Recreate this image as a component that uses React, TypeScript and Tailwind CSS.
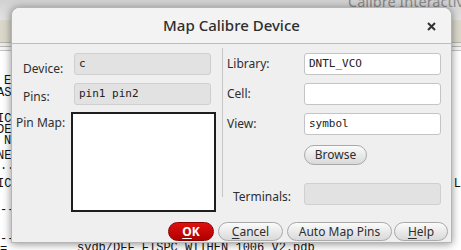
import React from "react";

const sans = { fontFamily: '"Noto Sans", "Open Sans", sans-serif' };
const mono = { fontFamily: '"DejaVu Sans Mono", monospace' };
const bgMono = { fontFamily: '"Liberation Mono", monospace' };

function Field({ value, disabled }: { value?: string; disabled?: boolean }) {
  return (
    <div
      className={
        "w-[137px] h-[22px] shrink-0 rounded-[3px] border flex items-center px-[4px] text-[11px] text-[#222] " +
        (disabled ? "bg-[#e2e2e2] border-[#cfcfcf]" : "bg-white border-[#c4c4c4]")
      }
      style={mono}
    >
      {value}
    </div>
  );
}

function Btn({ children, w }: { children: React.ReactNode; w: string }) {
  return (
    <div
      className={
        "h-[19px] rounded-full border border-[#a9a9a9] bg-gradient-to-b from-[#fbfbfb] to-[#d9d9d9] flex items-center justify-center text-[12px] text-[#2e2e2e] " +
        w
      }
      style={sans}
    >
      {children}
    </div>
  );
}

const bgLines: { t: string; h: string; ml: number }[] = [
  { t: "E", h: "h-[12px]", ml: 4 },
  { t: "AS", h: "h-[26px]", ml: -3 },
  { t: "IC", h: "h-[11px]", ml: -3 },
  { t: "DE", h: "h-[11px]", ml: -3 },
  { t: "N", h: "h-[15px]", ml: 4 },
  { t: "NE", h: "h-[10px]", ml: -3 },
  { t: "..", h: "h-[18px]", ml: 0 },
  { t: "IC", h: "h-[26px]", ml: -3 },
  { t: "--", h: "h-[29px]", ml: 0 },
  { t: "--", h: "h-[10px]", ml: 0 },
  { t: "=", h: "h-[10px]", ml: 0 },
];

export default function App() {
  return (
    <div className="relative w-[461px] h-[250px] overflow-hidden bg-white">
      {/* background window */}
      <div className="flex flex-col">
        <div className="h-[20px] bg-gradient-to-b from-[#d2d2d2] to-[#e2e2e2] flex">
          <div className="ml-[348px] mt-[-9px] text-[14.5px] text-[#8a8a8a] whitespace-nowrap" style={sans}>
            Calibre Interactive
          </div>
        </div>
        <div className="h-[23px] bg-[#dbd8cb] border-b border-[#b9b6aa]" />
        <div className="h-[3px] bg-[#ecebe6]" />
        <div className="h-[1px] bg-[#b9b9b9]" />
        <div className="h-[3px] bg-[#f4f4f4]" />
        <div className="h-[1px] bg-[#c4c4c4]" />
        <div className="flex">
          <div className="flex flex-col pt-[25px] text-[12px] leading-[10px] text-[#111]" style={bgMono}>
            {bgLines.map((l, i) => (
              <div key={i} className={"whitespace-pre " + l.h} style={{ marginLeft: l.ml }}>
                {l.t}
              </div>
            ))}
          </div>
          <div className="flex-1" />
          <div className="pt-[124px] text-[12px] text-[#111]" style={bgMono}>
            <span>L</span>
          </div>
        </div>
      </div>
      <div className="absolute left-[77px] top-[239px] text-[12px] text-[#111] whitespace-nowrap" style={bgMono}>
        svdb/DFF_FTSPC_WITHEN_1006_V2.pdb
      </div>

      {/* dialog */}
      <div
        className="absolute left-[11px] top-[7px] w-[441px] h-[236px] rounded-t-[8px] bg-[#efefef] border border-[#b5b5b5] shadow-[0_1px_8px_rgba(0,0,0,0.45)] flex flex-col"
        style={sans}
      >
        <div className="relative h-[36px] shrink-0 rounded-t-[8px] bg-[#f3f3f3] border-b border-[#bdbdbd] flex items-center justify-center">
          <span className="text-[15px] font-medium text-[#2e2e2e]">Map Calibre Device</span>
          <svg className="absolute right-[15px] top-[14px]" width="9" height="9" viewBox="0 0 9 9">
            <path d="M1 1 L8 8 M8 1 L1 8" stroke="#2e3436" strokeWidth="2" />
          </svg>
        </div>

        <div className="flex flex-1">
          {/* left column */}
          <div className="w-[210px] pt-[9px] flex flex-col">
            <div className="flex items-center h-[22px]">
              <span className="w-[62px] pl-[11px] translate-y-[5px] text-[12px] text-[#2e2e2e]">Device:</span>
              <Field value="c" disabled />
            </div>
            <div className="flex items-center h-[22px] mt-[8px]">
              <span className="w-[62px] pl-[11px] translate-y-[3px] text-[12px] text-[#2e2e2e]">Pins:</span>
              <Field value="pin1 pin2" disabled />
            </div>
            <div className="flex items-start mt-[7px]">
              <span className="w-[59px] pl-[4px] mt-[2px] text-[12px] text-[#2e2e2e]">Pin Map:</span>
              <div className="w-[145px] h-[100px] bg-white border-2 border-[#1e1e1e]" />
            </div>
          </div>

          {/* divider */}
          <div className="mt-[4px] mb-[25px] w-[1px] bg-[#c6c6c6]" />

          {/* right column */}
          <div className="flex-1 pt-[9px] flex flex-col">
            <div className="flex items-center h-[22px]">
              <span className="w-[81px] pl-[4px] text-[12px] text-[#2e2e2e]">Library:</span>
              <Field value="DNTL_VCO" />
            </div>
            <div className="flex items-center h-[22px] mt-[8px]">
              <span className="w-[81px] pl-[4px] text-[12px] text-[#2e2e2e]">Cell:</span>
              <Field />
            </div>
            <div className="flex items-center h-[22px] mt-[8px]">
              <span className="w-[81px] pl-[4px] text-[12px] text-[#2e2e2e]">View:</span>
              <Field value="symbol" />
            </div>
            <div className="flex mt-[10px] pl-[81px]">
              <Btn w="w-[63px] h-[20px]">Browse</Btn>
            </div>
            <div className="flex items-center h-[22px] mt-[18px]">
              <span className="w-[81px] pl-[10px] translate-y-[3px] text-[12px] text-[#2e2e2e]">Terminals:</span>
              <Field disabled />
            </div>
          </div>
        </div>

        <div className="flex justify-end pr-[3px] pb-[1px]">
          <div className="w-[46px] h-[19px] rounded-full border border-[#8a0000] bg-gradient-to-b from-[#e01010] to-[#b00000] flex items-center justify-center text-[12px] font-bold text-white">
            <span><span className="underline underline-offset-2">O</span>K</span>
          </div>
          <div className="ml-[4px]">
            <Btn w="w-[65px]">
              <span><span className="underline underline-offset-2">C</span>ancel</span>
            </Btn>
          </div>
          <div className="ml-[4px]">
            <Btn w="w-[105px]">Auto Map Pins</Btn>
          </div>
          <div className="ml-[2px]">
            <Btn w="w-[54px]">
              <span><span className="underline underline-offset-2">H</span>elp</span>
            </Btn>
          </div>
        </div>
      </div>
    </div>
  );
}
